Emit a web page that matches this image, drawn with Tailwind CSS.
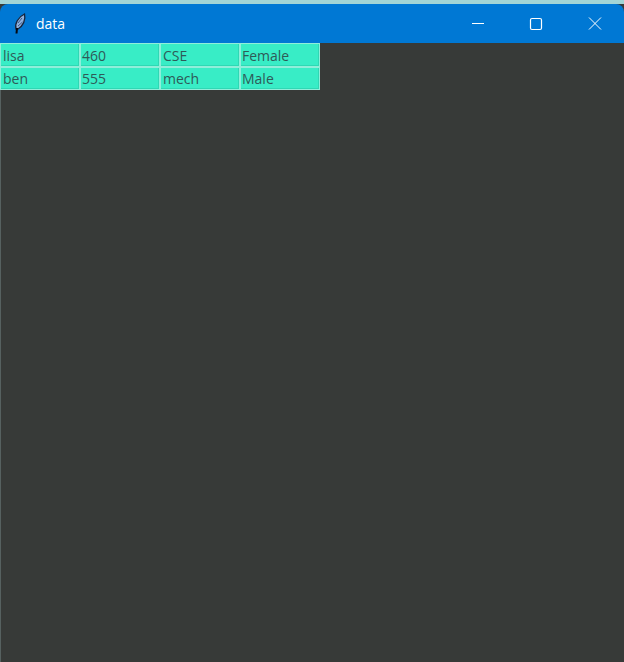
<!DOCTYPE html>
<html lang="en">
<head>
  <meta charset="UTF-8">
  <title>data</title>
  <script src="https://cdn.jsdelivr.net/npm/@tailwindcss/browser@4"></script>
</head>
<body class="w-[624px] h-[662px] overflow-hidden bg-[#a3d5d6] font-['Open_Sans',sans-serif]">
  <div class="mt-[4px] h-[658px] flex flex-col bg-[#373a38]">
    <!-- Title bar -->
    <div class="h-[39px] flex items-center bg-[#0078d4] rounded-t-[8px] text-white">
      <svg class="ml-[12px] w-[16px] h-[22px]" viewBox="0 0 16 22">
        <path d="M4 16C2.500 11 6 4 12.500 1C14 7 11 13 6 16Z" fill="#8fb0dc" stroke="#16243c" stroke-width="1.300"/>
        <path d="M6 10L10 5M6 13L10.500 9" stroke="#3c5a88" stroke-width="1"/>
        <path d="M5 15L4.500 20.500" stroke="#05080f" stroke-width="2"/>
      </svg>
      <span class="ml-[8px] text-[14px] leading-none">data</span>
      <div class="ml-auto flex items-center">
        <svg class="w-[59px] h-[39px]" viewBox="0 0 59 39"><path d="M24 19.500H36" stroke="white" stroke-width="1"/></svg>
        <svg class="w-[59px] h-[39px]" viewBox="0 0 59 39"><rect x="23.500" y="14.500" width="11" height="11" rx="1.500" fill="none" stroke="white" stroke-width="1.200"/></svg>
        <svg class="w-[58px] h-[39px]" viewBox="0 0 58 39"><path d="M23 13.500L35 25.500M35 13.500L23 25.500" stroke="white" stroke-width="1"/></svg>
      </div>
    </div>
    <!-- Data table -->
    <div class="flex-1 shadow-[inset_1px_0_0_#566160]">
      <div class="grid grid-cols-[repeat(4,80px)] grid-rows-[24px_23px] w-[320px] text-[14px] leading-none text-[#2f5a58]">
        <div class="flex items-center pl-[2px] pt-[1px] bg-[#38edc6] border border-[#8feeda] shadow-[inset_-1px_-1px_0_#2fd8b4]">lisa</div>
        <div class="flex items-center pl-[1px] pt-[1px] bg-[#38edc6] border border-[#8feeda] shadow-[inset_-1px_-1px_0_#2fd8b4]">460</div>
        <div class="flex items-center pl-[2px] pt-[1px] bg-[#38edc6] border border-[#8feeda] shadow-[inset_-1px_-1px_0_#2fd8b4]">CSE</div>
        <div class="flex items-center pl-[1px] pt-[1px] bg-[#38edc6] border border-[#8feeda] shadow-[inset_-1px_-1px_0_#2fd8b4]">Female</div>
        <div class="flex items-center pl-[2px] bg-[#38edc6] border border-[#8feeda] shadow-[inset_-1px_-1px_0_#2fd8b4]">ben</div>
        <div class="flex items-center pl-[1px] bg-[#38edc6] border border-[#8feeda] shadow-[inset_-1px_-1px_0_#2fd8b4]">555</div>
        <div class="flex items-center pl-[2px] bg-[#38edc6] border border-[#8feeda] shadow-[inset_-1px_-1px_0_#2fd8b4]">mech</div>
        <div class="flex items-center pl-[1px] bg-[#38edc6] border border-[#8feeda] shadow-[inset_-1px_-1px_0_#2fd8b4]">Male</div>
      </div>
    </div>
  </div>
</body>
</html>
